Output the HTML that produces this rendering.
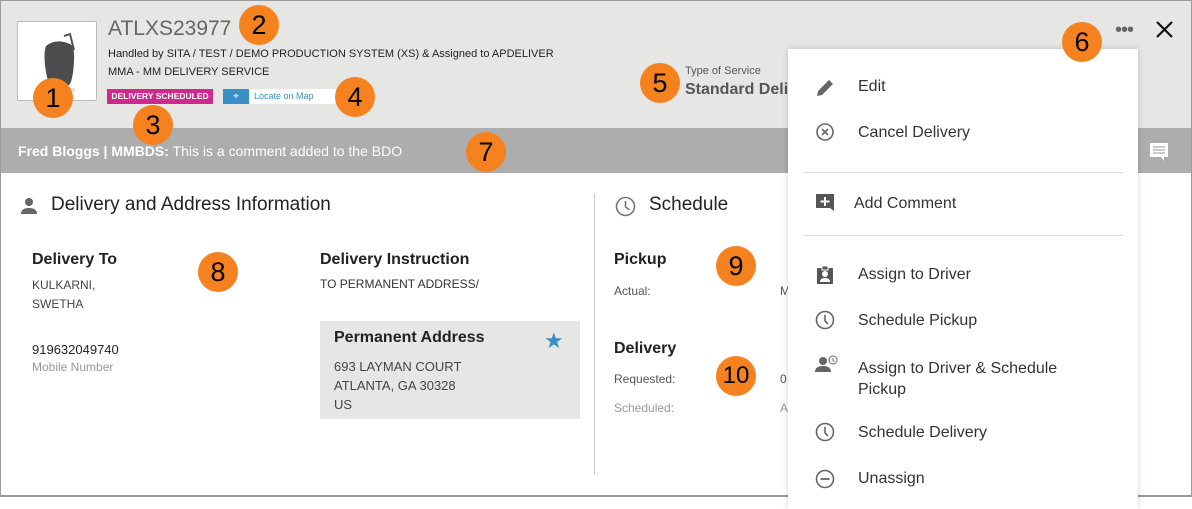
<!DOCTYPE html>
<html><head><meta charset="utf-8"><style>
*{box-sizing:border-box;margin:0;padding:0}
body{width:1192px;height:497px;overflow:hidden;font-family:"Liberation Sans",sans-serif;background:#fff;position:relative;color:#222}
.abs{position:absolute}
.frame{left:0;top:0;width:1192px;height:497px;border:1px solid #9a9a9a;border-bottom:2px solid #9a9a9a}
.hdr{left:1px;top:1px;width:1190px;height:127px;background:#e6e6e4}
.bar{left:1px;top:128px;width:1190px;height:45px;background:#adadad}
.c{position:absolute;width:40px;height:40px;border-radius:50%;background:#f5821f;color:#000;font-size:27px;text-align:center;line-height:40px;z-index:5}
.menu{left:788px;top:49px;width:350px;height:460px;background:#fff;box-shadow:0 0 6px rgba(0,0,0,.18);z-index:3}
.mi{position:absolute;left:70px;font-size:16px;color:#333}
.ic{position:absolute;left:27px}
.hr{position:absolute;left:15px;width:320px;height:1px;background:#ddd}
.t{position:absolute;white-space:nowrap}
</style></head><body>
<div class="abs hdr"></div>
<div class="abs bar"></div>
<div class="abs frame"></div>

<div class="abs" style="left:17px;top:21px;width:80px;height:80px;background:#fff;border:1px solid #bbb;border-radius:2px">
<svg width="80" height="80" viewBox="0 0 80 80"><path d="M46 14 L52 12 L56 28" stroke="#555" stroke-width="2" fill="none"/><path d="M28 24 Q38 16 52 22 Q57 24 56 40 Q55 56 52 62 Q44 68 34 66 Q30 62 28 50 Q25 32 28 24Z" fill="#4c4c4e"/><ellipse cx="44" cy="68" rx="14" ry="3" fill="#ddd"/></svg></div>

<div class="t" style="left:108px;top:17px;font-size:21px;color:#666">ATLXS23977</div>
<div class="t" style="left:108px;top:48px;font-size:11px;color:#222">Handled by SITA / TEST / DEMO PRODUCTION SYSTEM (XS) &amp; Assigned to APDELIVER</div>
<div class="t" style="left:108px;top:66px;font-size:11px;color:#222">MMA - MM DELIVERY SERVICE</div>
<div class="t" style="left:107px;top:89px;width:106px;height:15px;background:#cc2a8f;color:#fff;font-size:8.5px;font-weight:bold;text-align:center;line-height:15px">DELIVERY SCHEDULED</div>
<div class="t" style="left:223px;top:89px;width:113px;height:15px;background:#fff;border-radius:2px;font-size:9px;color:#3a8fc4;line-height:15px"><span style="display:inline-block;width:26px;height:15px;background:#3a8fc4;vertical-align:top;color:#fff;text-align:center;font-size:10px">⌖</span> &nbsp;Locate on Map</div>

<div class="t" style="left:685px;top:65px;font-size:11px;color:#555">Type of Service</div>
<div class="t" style="left:685px;top:81px;font-size:16px;font-weight:bold;color:#555">Standard Deli</div>

<div class="t" style="left:1115px;top:19px;font-size:20px;color:#666;letter-spacing:-1px">•••</div>
<svg class="abs" style="left:1156px;top:21px" width="17" height="17"><path d="M1 1L16 16M16 1L1 16" stroke="#111" stroke-width="2.2"/></svg>

<div class="t" style="left:18px;top:143px;font-size:14px;color:#fff"><b>Fred Bloggs | MMBDS:</b> This is a comment added to the BDO</div>
<svg class="abs" style="left:1148px;top:141px" width="22" height="22"><path d="M2 2h18v14h-4v4l-3-4H2z" fill="#fff"/><path d="M5 6h12M5 9h12M5 12h12" stroke="#adadad" stroke-width="1.3"/></svg>

<svg class="abs" style="left:20px;top:197px" width="18" height="18"><circle cx="9" cy="5" r="4" fill="#666"/><path d="M1 17q0-6 8-6t8 6z" fill="#666"/></svg>
<div class="t" style="left:51px;top:194px;font-size:19px;color:#222">Delivery and Address Information</div>
<div class="t" style="left:32px;top:251px;font-size:16px;font-weight:bold;color:#222">Delivery To</div>
<div class="t" style="left:32px;top:276px;font-size:12px;color:#444;line-height:19px">KULKARNI,<br>SWETHA</div>
<div class="t" style="left:32px;top:342px;font-size:13px;color:#222">919632049740</div>
<div class="t" style="left:32px;top:360px;font-size:12px;color:#999">Mobile Number</div>
<div class="t" style="left:320px;top:251px;font-size:16px;font-weight:bold;color:#222">Delivery Instruction</div>
<div class="t" style="left:320px;top:277px;font-size:12px;color:#333">TO PERMANENT ADDRESS/</div>
<div class="abs" style="left:320px;top:321px;width:260px;height:98px;background:#e6e6e4"></div>
<div class="t" style="left:334px;top:329px;font-size:16px;font-weight:bold;color:#222">Permanent Address</div>
<div class="t" style="left:544px;top:328px;font-size:22px;color:#3a8fc4">★</div>
<div class="t" style="left:334px;top:357px;font-size:13px;color:#444;line-height:19px">693 LAYMAN COURT<br>ATLANTA, GA 30328<br>US</div>

<div class="abs" style="left:594px;top:193px;width:1px;height:282px;background:#ccc"></div>
<svg class="abs" style="left:615px;top:196px" width="21" height="21"><circle cx="10.5" cy="10.5" r="9" fill="none" stroke="#777" stroke-width="1.6"/><path d="M10.5 5v6l4 3" fill="none" stroke="#777" stroke-width="1.6"/></svg>
<div class="t" style="left:649px;top:194px;font-size:19px;color:#222">Schedule</div>
<div class="t" style="left:614px;top:251px;font-size:16px;font-weight:bold;color:#222">Pickup</div>
<div class="t" style="left:614px;top:284px;font-size:12px;color:#555">Actual:</div>
<div class="t" style="left:780px;top:284px;font-size:12px;color:#555">M</div>
<div class="t" style="left:614px;top:340px;font-size:16px;font-weight:bold;color:#222">Delivery</div>
<div class="t" style="left:614px;top:372px;font-size:12px;color:#555">Requested:</div>
<div class="t" style="left:780px;top:372px;font-size:12px;color:#555">0</div>
<div class="t" style="left:614px;top:401px;font-size:12px;color:#999">Scheduled:</div>
<div class="t" style="left:780px;top:401px;font-size:12px;color:#999">A</div>

<div class="abs menu">
<svg class="ic" style="top:29px" width="20" height="20"><path d="M2 18l1-5L14 2l4 4L7 17z" fill="#666"/></svg>
<div class="mi" style="top:29px">Edit</div>
<svg class="ic" style="top:73px" width="20" height="20"><circle cx="10" cy="10" r="8" fill="none" stroke="#666" stroke-width="1.6"/><path d="M7 7l6 6M13 7l-6 6" stroke="#666" stroke-width="1.6"/></svg>
<div class="mi" style="top:75px">Cancel Delivery</div>
<div class="hr" style="top:123px"></div>
<svg class="ic" style="top:144px" width="20" height="20"><path d="M1 1h18v17l-4-3H1z" fill="#555"/><path d="M10 4v9M5.5 8.5h9" stroke="#fff" stroke-width="2"/></svg>
<div class="mi" style="top:146px;left:66px">Add Comment</div>
<div class="hr" style="top:186px"></div>
<svg class="ic" style="top:216px" width="20" height="20"><rect x="2" y="3" width="16" height="16" rx="1" fill="#555"/><rect x="7" y="1" width="6" height="4" fill="#555" stroke="#fff" stroke-width="1"/><circle cx="10" cy="9" r="3" fill="#fff"/><path d="M5 17q0-4 5-4t5 4z" fill="#fff"/></svg>
<div class="mi" style="top:217px">Assign to Driver</div>
<svg class="ic" style="top:261px" width="20" height="20"><circle cx="10" cy="10" r="8.5" fill="none" stroke="#666" stroke-width="1.6"/><path d="M10 5v6l3 3" fill="none" stroke="#666" stroke-width="1.6"/></svg>
<div class="mi" style="top:263px">Schedule Pickup</div>
<svg class="ic" style="top:306px" width="24" height="20"><circle cx="8" cy="6" r="4" fill="#666"/><path d="M0 17q0-6 8-6t8 6z" fill="#666"/><circle cx="18" cy="5" r="4" fill="none" stroke="#666" stroke-width="1"/><path d="M18 3v2.5l1.5 1" fill="none" stroke="#666" stroke-width="1"/></svg>
<div class="mi" style="top:309px;line-height:21px">Assign to Driver &amp; Schedule<br>Pickup</div>
<svg class="ic" style="top:373px" width="20" height="20"><circle cx="10" cy="10" r="8.5" fill="none" stroke="#666" stroke-width="1.6"/><path d="M10 5v6l3 3" fill="none" stroke="#666" stroke-width="1.6"/></svg>
<div class="mi" style="top:375px">Schedule Delivery</div>
<svg class="ic" style="top:420px" width="20" height="20"><circle cx="10" cy="10" r="8.5" fill="none" stroke="#666" stroke-width="1.6"/><path d="M5.5 10h9" stroke="#666" stroke-width="1.8"/></svg>
<div class="mi" style="top:421px">Unassign</div>
</div>

<div class="c" style="left:33px;top:78px">1</div>
<div class="c" style="left:239px;top:5px">2</div>
<div class="c" style="left:133px;top:105px">3</div>
<div class="c" style="left:335px;top:77px">4</div>
<div class="c" style="left:640px;top:63px">5</div>
<div class="c" style="left:1062px;top:22px">6</div>
<div class="c" style="left:466px;top:132px">7</div>
<div class="c" style="left:198px;top:252px">8</div>
<div class="c" style="left:716px;top:246px">9</div>
<div class="c" style="left:716px;top:356px;font-size:24px">10</div>
</body></html>
